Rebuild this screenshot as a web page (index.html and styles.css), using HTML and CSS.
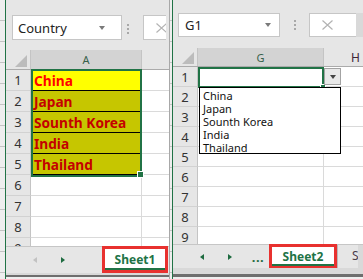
FILE: index.html
```html
<!DOCTYPE html>
<html>
<head>
<meta charset="utf-8">
<link rel="stylesheet" href="styles.css">
</head>
<body>
<div class="screen">
  <section class="pane pane-left">
    <div class="edge"></div>
    <div class="sheet">
      <div class="fbar">
        <div class="namebox"><span>Country</span><span class="caret"></span></div>
        <div class="dots"><i></i><i></i><i></i></div>
        <div class="xbox"><svg width="11" height="10" viewBox="0 0 11 10"><path d="M0.5 0.5 L10.5 9.5 M10.5 0.5 L0.5 9.5" stroke="#b3b3b3" stroke-width="1.2" fill="none"/></svg></div>
      </div>
      <div class="body">
        <div class="hdr">
          <div class="corner"><svg width="12" height="12" viewBox="0 0 12 12"><path d="M12 0 L12 12 L0 12 Z" fill="#bcbcbc"/></svg></div>
          <div class="colh sel">A</div>
          <div class="colh"></div>
        </div>
        <div class="rows">
          <div class="row"><div class="rn">1</div><div class="c val yel">China</div><div class="c"></div></div>
          <div class="row"><div class="rn">2</div><div class="c val dim">Japan</div><div class="c"></div></div>
          <div class="row"><div class="rn">3</div><div class="c val dim">Sounth Korea</div><div class="c"></div></div>
          <div class="row"><div class="rn">4</div><div class="c val dim">India</div><div class="c"></div></div>
          <div class="row"><div class="rn">5</div><div class="c val dim">Thailand</div><div class="c"></div></div>
          <div class="row"><div class="rn">6</div><div class="c"></div><div class="c"></div></div>
          <div class="row"><div class="rn">7</div><div class="c"></div><div class="c"></div></div>
          <div class="row"><div class="rn">8</div><div class="c"></div><div class="c"></div></div>
          <div class="row"><div class="rn">9</div><div class="c"></div><div class="c"></div></div>
        </div>
        <div class="selection sel-left"></div>
        <div class="handle handle-left"></div>
      </div>
      <div class="tabbar">
        <span class="nav"><span class="tri-l off"></span></span>
        <span class="nav"><span class="tri-r"></span></span>
        <span class="nav"></span>
        <div class="tab">Sheet1</div>
      </div>
      <div class="shade"></div>
    </div>
  </section>

  <section class="pane pane-right">
    <div class="edge"></div>
    <div class="sheet">
      <div class="fbar">
        <div class="namebox"><span>G1</span><span class="caret"></span></div>
        <div class="dots"><i></i><i></i><i></i></div>
        <div class="xbox"><svg width="11" height="10" viewBox="0 0 11 10"><path d="M0.5 0.5 L10.5 9.5 M10.5 0.5 L0.5 9.5" stroke="#b3b3b3" stroke-width="1.2" fill="none"/></svg></div>
        <div class="strip"></div>
      </div>
      <div class="body">
        <div class="hdr">
          <div class="corner"><svg width="12" height="12" viewBox="0 0 12 12"><path d="M12 0 L12 12 L0 12 Z" fill="#bcbcbc"/></svg></div>
          <div class="colh sel">G</div>
          <div class="colh h">H</div>
        </div>
        <div class="rows">
          <div class="row"><div class="rn">1</div><div class="c"></div><div class="c"></div></div>
          <div class="row"><div class="rn">2</div><div class="c"></div><div class="c"></div></div>
          <div class="row"><div class="rn">3</div><div class="c"></div><div class="c"></div></div>
          <div class="row"><div class="rn">4</div><div class="c"></div><div class="c"></div></div>
          <div class="row"><div class="rn">5</div><div class="c"></div><div class="c"></div></div>
          <div class="row"><div class="rn">6</div><div class="c"></div><div class="c"></div></div>
          <div class="row"><div class="rn">7</div><div class="c"></div><div class="c"></div></div>
          <div class="row"><div class="rn">8</div><div class="c"></div><div class="c"></div></div>
          <div class="row"><div class="rn">9</div><div class="c"></div><div class="c"></div></div>
        </div>
        <div class="selection sel-right"></div>
        <div class="handle handle-right"></div>
        <div class="ddbtn"><span class="caret dark"></span></div>
        <ul class="ddlist">
          <li>China</li>
          <li>Japan</li>
          <li>Sounth Korea</li>
          <li>India</li>
          <li>Thailand</li>
        </ul>
      </div>
      <div class="tabbar">
        <span class="nav"><span class="tri-l"></span></span>
        <span class="nav"><span class="tri-r"></span></span>
        <span class="nav more">...</span>
        <div class="tab">Sheet2</div>
        <div class="tab-next">Sheet3</div>
        <div class="strip"></div>
      </div>
      <div class="shade"></div>
    </div>
  </section>
</div>
</body>
</html>
```

FILE: styles.css
```css
* { box-sizing: border-box; }
html, body { margin: 0; padding: 0; }
body {
  width: 363px;
  height: 279px;
  overflow: hidden;
  background: #ffffff;
  font-family: "Noto Sans", "DejaVu Sans", sans-serif;
  color: #333;
}
.screen { display: flex; width: 363px; height: 279px; }
.pane { display: flex; height: 279px; overflow: hidden; position: relative; }
.pane-left { width: 170px; border-right: 1px solid #a8a8a8; }
.pane-right { width: 193px; }

.edge {
  flex: none;
  background: repeating-linear-gradient(to bottom, #eeeeee 0 20px, #c4c4c4 20px 21px);
}
.pane-left .edge { width: 5px; }
.pane-right .edge { width: 2px; }

.sheet {
  flex: 1;
  min-width: 0;
  display: flex;
  flex-direction: column;
  border-left: 1px solid #217346;
  overflow: hidden;
}

/* formula bar */
.fbar { flex: none; display: flex; align-items: flex-start; background: #e6e6e6; }
.pane-left .fbar { height: 50px; }
.pane-right .fbar { height: 48px; }

.namebox {
  flex: none;
  display: flex;
  align-items: center;
  justify-content: space-between;
  background: #fff;
  border: 1px solid #c6c6c6;
  font-size: 13px;
  color: #222;
}
.pane-left .namebox { margin: 15px 0 0 6px; width: 110px; height: 25px; padding: 0 16px 0 5px; }
.pane-right .namebox { margin: 13px 0 0 5px; width: 102px; height: 24px; padding: 0 8px 0 6px; }

.caret {
  width: 0; height: 0;
  border-left: 3.5px solid transparent;
  border-right: 3.5px solid transparent;
  border-top: 4px solid #7a7a7a;
}
.caret.dark { border-top-color: #444; }

.dots { flex: none; display: flex; flex-direction: column; gap: 2px; }
.dots i { display: block; width: 2px; height: 2px; background: #a8a8a8; }
.pane-left .dots { margin: 24px 0 0 5px; }
.pane-right .dots { margin: 20px 0 0 14px; }

.xbox {
  flex: none;
  display: flex;
  align-items: center;
  background: #fff;
  border: 1px solid #c6c6c6;
  border-right: none;
  overflow: hidden;
  padding-left: 12px;
}
.pane-left .xbox { margin: 15px 0 0 14px; width: 23px; height: 25px; }
.pane-right .xbox { margin: 13px 0 0 13px; width: 47px; height: 24px; }
.xbox svg { flex: none; }

.strip { flex: 1; align-self: stretch; background: #d9d9d9; }
.pane-right .fbar .strip { margin-top: 13px; height: 24px; align-self: flex-start; }

/* grid */
.body { flex: 1; min-height: 0; display: flex; flex-direction: column; position: relative; }
.hdr, .row { display: grid; flex: none; }
.pane-left .hdr, .pane-left .row { grid-template-columns: 25px 111px 40px; }
.pane-right .hdr, .pane-right .row { grid-template-columns: 25px 126px 64px; }
.pane-left .hdr { height: 20px; }
.pane-right .hdr { height: 19px; }
.hdr { background: #e6e6e6; border-bottom: 1px solid #ababab; }
.corner {
  display: flex;
  justify-content: flex-end;
  align-items: flex-end;
  padding: 0 3px 2px 0;
  border-right: 1px solid #c4c4c4;
}
.colh {
  display: flex;
  align-items: center;
  justify-content: center;
  font-size: 11px;
  color: #444;
  border-right: 1px solid #c4c4c4;
}
.colh.sel { background: #d3d3d3; color: #37604a; }
.colh.h { color: #3f2638; font-size: 12px; }

.rows { flex: 1; min-height: 0; overflow: hidden; }
.pane-left .row { height: 21px; }
.pane-right .row { height: 20px; }
.rn {
  display: flex;
  align-items: center;
  justify-content: center;
  background: #e6e6e6;
  border-right: 1px solid #c4c4c4;
  border-bottom: 1px solid #d2d2d2;
  font-size: 13px;
  color: #333;
}
.c { border-right: 1px solid #dadada; border-bottom: 1px solid #dadada; }
.val {
  display: flex;
  align-items: center;
  padding-left: 3px;
  font-weight: 700;
  font-size: 13.7px;
  border-bottom-color: #000;
  white-space: nowrap;
}
.val.yel { background: #ffff00; color: #ff0000; }
.val.dim { background: #c6c600; color: #c40000; }

.selection { position: absolute; border: 2px solid #217346; }
.sel-left { left: 25px; top: 19px; width: 111px; height: 108px; }
.sel-right { left: 25px; top: 19px; width: 126px; height: 21px; }
.handle { position: absolute; background: #217346; border: 1px solid #fff; }
.handle-left { left: 131px; top: 121px; width: 7px; height: 7px; }
.handle-right { left: 147px; top: 36px; width: 6px; height: 6px; }

.ddbtn {
  position: absolute;
  left: 151px;
  top: 20px;
  width: 17px;
  height: 17px;
  background: #e9e9e9;
  border: 1px solid #a3a3a3;
  display: flex;
  align-items: center;
  justify-content: center;
}
.ddlist {
  position: absolute;
  left: 26px;
  top: 39px;
  width: 142px;
  height: 67px;
  margin: 0;
  padding: 1px 0 0 3px;
  list-style: none;
  background: #fff;
  border: 1px solid #000;
  font-size: 11px;
  line-height: 13px;
  color: #111;
}

/* tab bar */
.tabbar {
  flex: none;
  display: flex;
  align-items: flex-start;
  background: #e6e6e6;
  border-top: 1px solid #c6c6c6;
  padding-left: 15px;
}
.pane-left .tabbar { height: 27px; }
.pane-right .tabbar { height: 24px; }
.nav {
  flex: none;
  width: 28px;
  align-self: center;
  display: flex;
  justify-content: center;
  align-items: center;
  height: 12px;
}
.tri-l, .tri-r { width: 0; height: 0; border-top: 3.5px solid transparent; border-bottom: 3.5px solid transparent; }
.tri-l { border-right: 4px solid #1e6b40; }
.tri-r { border-left: 4px solid #1e6b40; }
.tri-l.off { border-right-color: #c2c2c2; }
.more { font-size: 13px; font-weight: 700; color: #1e6b40; align-items: flex-end; letter-spacing: 0.5px; line-height: 12px; }

.tab {
  flex: none;
  margin-top: 2px;
  display: flex;
  align-items: center;
  justify-content: center;
  background: #fff;
  color: #217346;
  font-weight: 700;
  font-size: 12px;
  box-shadow: inset 0 -2px 0 #217346;
  outline: 3px solid #e8312f;
}
.pane-left .tab { width: 60px; height: 21px; }
.pane-right .tab { width: 62px; height: 19px; }
.tab-next {
  flex: none;
  width: 21px;
  margin-left: 3px;
  height: 100%;
  border-left: 1px solid #b8b8b8;
  padding-left: 14px;
  overflow: hidden;
  white-space: nowrap;
  font-size: 12px;
  color: #4a3a48;
  line-height: 22px;
}
.tabbar .strip { height: 100%; }

.shade { flex: none; }
.pane-left .shade { height: 6px; background: linear-gradient(to bottom, #d9d9d9 0 2px, #6e6e6e 2px 4px, #eeeeee 4px); }
.pane-right .shade { height: 11px; background: linear-gradient(to bottom, #d9d9d9 0 6px, #6e6e6e 6px 9px, #eeeeee 9px); }
```
